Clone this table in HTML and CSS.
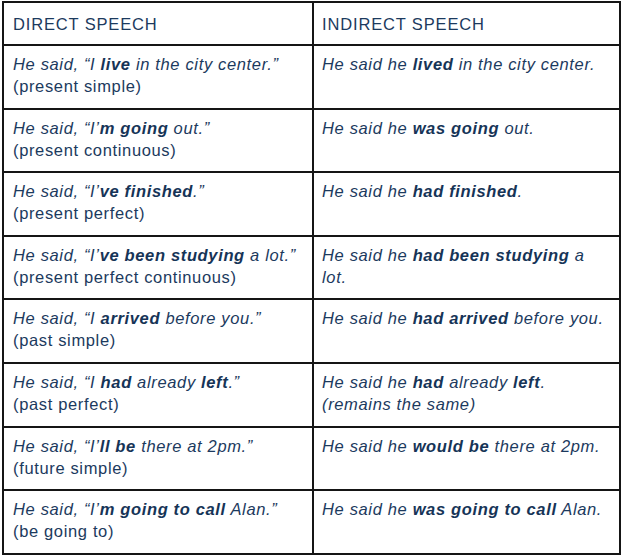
FILE: index.html
```html
<!DOCTYPE html>
<html>
<head>
<meta charset="utf-8">
<link rel="stylesheet" href="styles.css">
</head>
<body>
<table class="speech">
  <colgroup><col class="c1"><col class="c2"></colgroup>
  <thead>
    <tr class="head"><th>DIRECT SPEECH</th><th>INDIRECT SPEECH</th></tr>
  </thead>
  <tbody>
    <tr>
      <td>He said, “I <b>live</b> in the city center.”<br><span class="tense">(present simple)</span></td>
      <td>He said he <b>lived</b> in the city center.</td>
    </tr>
    <tr>
      <td>He said, “I’<b>m going</b> out.”<br><span class="tense">(present continuous)</span></td>
      <td>He said he <b>was going</b> out.</td>
    </tr>
    <tr>
      <td>He said, “I’<b>ve finished</b>.”<br><span class="tense">(present perfect)</span></td>
      <td>He said he <b>had finished</b>.</td>
    </tr>
    <tr>
      <td>He said, “I’<b>ve been studying</b> a lot.”<br><span class="tense">(present perfect continuous)</span></td>
      <td>He said he <b>had been studying</b> a<br>lot.</td>
    </tr>
    <tr>
      <td>He said, “I <b>arrived</b> before you.”<br><span class="tense">(past simple)</span></td>
      <td>He said he <b>had arrived</b> before you.</td>
    </tr>
    <tr>
      <td>He said, “I <b>had</b> already <b>left</b>.”<br><span class="tense">(past perfect)</span></td>
      <td>He said he <b>had</b> already <b>left</b>.<br>(remains the same)</td>
    </tr>
    <tr>
      <td>He said, “I’<b>ll be</b> there at 2pm.”<br><span class="tense">(future simple)</span></td>
      <td>He said he <b>would be</b> there at 2pm.</td>
    </tr>
    <tr>
      <td>He said, “I’<b>m going to call</b> Alan.”<br><span class="tense">(be going to)</span></td>
      <td>He said he <b>was going to call</b> Alan.</td>
    </tr>
  </tbody>
</table>
</body>
</html>
```
FILE: styles.css
```css
html, body {
  margin: 0;
  padding: 0;
  background: #ffffff;
}
body {
  padding: 1px 0 0 2px;
  font-family: "Liberation Sans", Arial, sans-serif;
  color: #1c3a5e;
}
.speech {
  border-collapse: collapse;
  width: 617px;
  table-layout: fixed;
  font-size: 16.5px;
  line-height: 22px;
}
.c1 { width: 310px; }
.c2 { width: 307px; }
.speech th,
.speech td {
  border: 2px solid #151515;
  text-align: left;
  vertical-align: top;
  padding: 0 6px 0 9px;
}
.speech th + th,
.speech td + td {
  padding-left: 8px;
}
.speech th {
  font-weight: normal;
  letter-spacing: 0.85px;
  height: 40px;
  vertical-align: middle;
  padding-top: 1px;
}
.speech td {
  font-style: italic;
  letter-spacing: 0.65px;
  height: 63.6px;
  padding-top: 7px;
  box-sizing: border-box;
}
.speech .tense {
  font-style: normal;
}
.speech b {
  font-weight: bold;
  color: #163457;
}
```
